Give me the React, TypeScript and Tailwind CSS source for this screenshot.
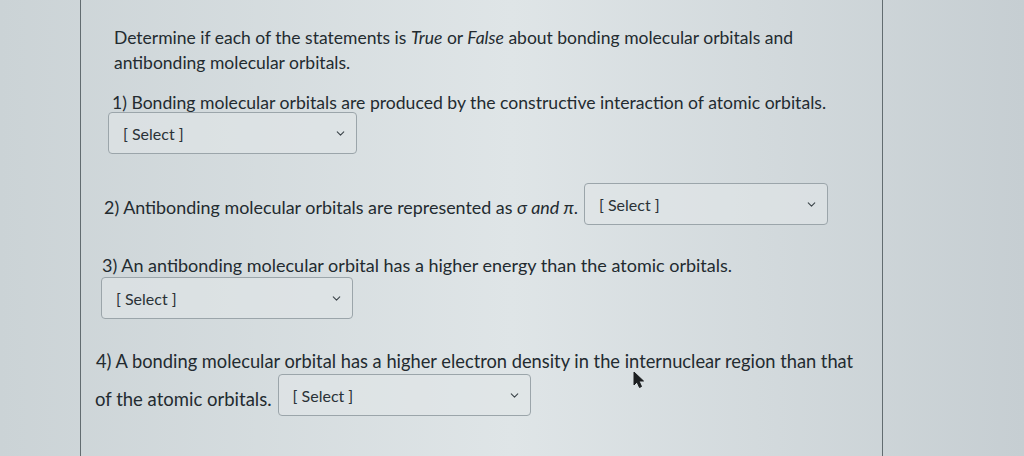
import { ChevronDown } from 'lucide-react';

const SelectBox = ({ width }: { width: string }) => (
  <div
    className={`${width} h-[42px] shrink-0 flex items-center justify-between pl-[14px] pr-[9px] border border-[#9ba5aa] rounded-[4px] bg-[#e1e6e8]/60 text-[16px] text-[#2a3237]`}
  >
    <span>[ Select ]</span>
    <ChevronDown size={13} strokeWidth={2} className="text-[#3c454a]" />
  </div>
);

const Cursor = () => (
  <svg width="12" height="18" viewBox="0 0 12 18" className="absolute left-[633px] top-[371px]">
    <path d="M1 1 L1 14 L4 11 L6.5 16.5 L8.5 15.5 L6 10 L10.5 10 Z" fill="#1c1f21" stroke="#1c1f21" strokeWidth="1" strokeLinejoin="round" />
  </svg>
);

export default function App() {
  return (
    <div
      className="relative w-full h-[456px] overflow-hidden flex bg-gradient-to-r from-[#cbd3d6] via-[#dfe5e7] to-[#c6ced2] text-[#232b30]"
      style={{ fontFamily: 'Lato, "Open Sans", sans-serif' }}
    >
      <div className="w-[80px] shrink-0" />

      <div className="w-[803px] shrink-0 border-l-[1.5px] border-r-[1.5px] border-[#626c70] leading-[25px]">
        {/* Intro */}
        <p className="mt-[25px] ml-[33px] w-[720px] text-[17.5px]">
          Determine if each of the statements is <i>True</i> or <i>False</i> about bonding molecular orbitals and
          antibonding molecular orbitals.
        </p>

        {/* 1 */}
        <p className="mt-[15px] ml-[31px] text-[17.6px]">
          1) Bonding molecular orbitals are produced by the constructive interaction of atomic orbitals.
        </p>
        <div className="ml-[27px] mt-[-3px]">
          <SelectBox width="w-[249px]" />
        </div>

        {/* 2 */}
        <div className="mt-[29px] ml-[23px] flex items-center gap-[6px]">
          <span className="mt-[6px] text-[17.9px] whitespace-nowrap">
            2) Antibonding molecular orbitals are represented as <i>σ and π</i>.
          </span>
          <SelectBox width="w-[244px]" />
        </div>

        {/* 3 */}
        <p className="mt-[28px] ml-[21px] text-[18px]">
          3) An antibonding molecular orbital has a higher energy than the atomic orbitals.
        </p>
        <div className="ml-[20px] mt-[-1px]">
          <SelectBox width="w-[252px]" />
        </div>

        {/* 4 */}
        <p className="mt-[30px] ml-[15px] text-[18.3px] whitespace-nowrap">
          4) A bonding molecular orbital has a higher electron density in the internuclear region than that
        </p>
        <div className="mt-[0px] ml-[14px] flex items-center gap-[6px]">
          <span className="mt-[9px] text-[18.5px] whitespace-nowrap">of the atomic orbitals.</span>
          <SelectBox width="w-[253px]" />
        </div>
      </div>

      <div className="flex-1" />
      <Cursor />
    </div>
  );
}
